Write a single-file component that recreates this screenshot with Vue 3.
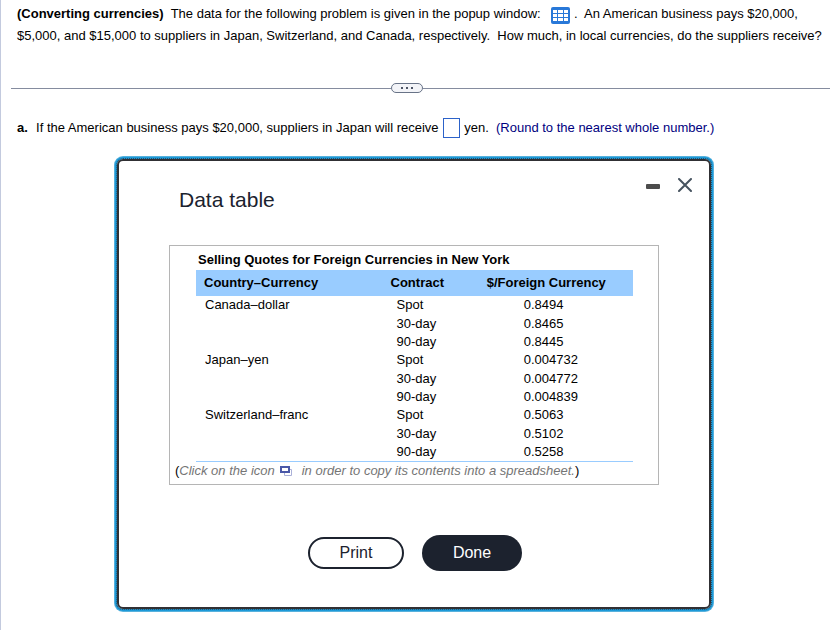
<script setup>
const groups = [
  {
    name: 'Canada–dollar',
    quotes: [['Spot', '0.8494'], ['30-day', '0.8465'], ['90-day', '0.8445']],
  },
  {
    name: 'Japan–yen',
    quotes: [['Spot', '0.004732'], ['30-day', '0.004772'], ['90-day', '0.004839']],
  },
  {
    name: 'Switzerland–franc',
    quotes: [['Spot', '0.5063'], ['30-day', '0.5102'], ['90-day', '0.5258']],
  },
]
</script>

<template>
  <main class="page">
    <p class="problem">
      <b>(Converting currencies)</b>&nbsp; The data for the following problem is given in the popup window:
      <button class="grid-button" type="button" aria-label="Open data table">
        <svg width="19" height="17" viewBox="0 0 19 17">
          <rect width="19" height="17" rx="2" fill="#2878d8" />
          <g fill="#fff">
            <rect x="2" y="3" width="4" height="3" /><rect x="7" y="3" width="5" height="3" /><rect x="13" y="3" width="4" height="3" />
            <rect x="2" y="7" width="4" height="3" /><rect x="7" y="7" width="5" height="3" /><rect x="13" y="7" width="4" height="3" />
            <rect x="2" y="11" width="4" height="3" /><rect x="7" y="11" width="5" height="3" /><rect x="13" y="11" width="4" height="3" />
          </g>
        </svg>
      </button>
      .&nbsp; An American business pays $20,000, $5,000, and $15,000 to suppliers in Japan, Switzerland, and Canada, respectively.&nbsp; How much, in local currencies, do the suppliers receive?
    </p>

    <div class="divider">
      <button class="expander" type="button" aria-label="Expand">
        <svg width="12" height="2" viewBox="0 0 12 2" fill="#4d5566">
          <rect width="2" height="2" /><rect x="5" width="2" height="2" /><rect x="10" width="2" height="2" />
        </svg>
      </button>
    </div>

    <p class="question">
      <label for="answer"><b>a.</b>&nbsp; If the American business pays $20,000, suppliers in Japan will receive</label>
      <input id="answer" class="answer" type="text" />
      yen.&nbsp; <span class="hint">(Round to the nearest whole number.)</span>
    </p>

    <section class="dialog" role="dialog" aria-labelledby="dialog-title">
      <header class="dialog-head">
        <h1 id="dialog-title">Data table</h1>
        <div class="window-buttons">
          <button type="button" aria-label="Minimize">
            <svg width="14" height="16" viewBox="0 0 14 16"><rect y="7" width="14" height="5" rx="1" fill="#4c4c4c" /></svg>
          </button>
          <button type="button" aria-label="Close">
            <svg width="14" height="14" viewBox="0 0 14 14">
              <path d="M1 1L13 13M13 1L1 13" stroke="#46535f" stroke-width="2" stroke-linecap="round" />
            </svg>
          </button>
        </div>
      </header>

      <div class="sheet">
        <table>
          <caption>Selling Quotes for Foreign Currencies in New York</caption>
          <colgroup><col class="col-country" /><col class="col-contract" /><col /></colgroup>
          <thead>
            <tr><th>Country–Currency</th><th>Contract</th><th>$/Foreign Currency</th></tr>
          </thead>
          <tbody v-for="group in groups" :key="group.name">
            <tr v-for="(quote, i) in group.quotes" :key="quote[0]">
              <td>{{ i === 0 ? group.name : '' }}</td>
              <td>{{ quote[0] }}</td>
              <td>{{ quote[1] }}</td>
            </tr>
          </tbody>
        </table>
        <p class="note">
          (<i>Click on the icon</i>
          <button class="copy" type="button" aria-label="Copy to spreadsheet">
            <svg width="12" height="10" viewBox="0 0 12 10" fill="none">
              <path d="M9 3.5H11.5V9.5H4.5V7" stroke="#aab0d8" />
              <rect x="1" y="1" width="8" height="5" stroke="#4a58a8" stroke-width="2" fill="#fff" />
            </svg>
          </button>
          <i>in order to copy its contents into a spreadsheet.</i>)
        </p>
      </div>

      <footer class="actions">
        <button class="print" type="button">Print</button>
        <button class="done" type="button">Done</button>
      </footer>
    </section>
  </main>
</template>

<style>
body {
  margin: 0;
  background: #fff;
}
</style>

<style scoped>
.page {
  box-sizing: border-box;
  min-height: 100vh;
  border-left: 1px solid #c3cade;
  padding: 3px 3px 18px 10px;
  font: 13px/22px "Liberation Sans", Arial, sans-serif;
  color: #000;
}
p {
  margin: 0;
}
button {
  padding: 0;
  border: 0;
  background: none;
  font-family: inherit;
  cursor: pointer;
}
svg {
  display: block;
}
.problem {
  padding-left: 6px;
}
.grid-button {
  margin: 0 0 0 7px;
  vertical-align: -6px;
}
.divider {
  display: flex;
  align-items: center;
  margin-top: 36px;
}
.divider::before,
.divider::after {
  content: "";
  flex: 380 1 0;
  height: 1px;
  background: #858c9f;
}
.divider::after {
  flex-grow: 407;
}
.expander {
  display: flex;
  align-items: center;
  justify-content: center;
  box-sizing: border-box;
  width: 32px;
  height: 10px;
  border: 1px solid #687387;
  border-radius: 5px;
  background: #f3f4f8;
}
.question {
  margin-top: 24px;
  padding-left: 6px;
}
.question b {
  margin-right: 1px;
}
.answer {
  box-sizing: border-box;
  width: 17px;
  height: 20px;
  margin: 1px 1px 0 4px;
  padding: 0;
  border: 1px solid #2c62c9;
  vertical-align: top;
  font: inherit;
}
.hint {
  color: #000080;
}
.dialog {
  box-sizing: border-box;
  max-width: 594px;
  margin: 20px auto 0 106px;
  padding: 14px 17px 36px 16px;
  border: 2px solid #303034;
  border-radius: 6px;
  outline: 1px dotted #26506a;
  box-shadow: 0 0 0 2px #1c9ad9, 0 0 0 3px #58b1dc;
}
.dialog-head {
  display: flex;
  align-items: flex-start;
  justify-content: space-between;
  padding-left: 44px;
}
h1 {
  margin: 10px 0 0;
  font-size: 21px;
  font-weight: 400;
  line-height: 30px;
  color: #1b222e;
}
.window-buttons {
  display: flex;
  align-items: center;
  gap: 18px;
  margin-top: 2px;
}
.sheet {
  margin: 30px 33px 0 34px;
  padding: 3px 25px 4px 5px;
  border: 1px solid #b5b5b5;
}
table {
  box-sizing: border-box;
  width: calc(100% - 21px);
  margin-left: 21px;
  border-collapse: separate;
  border-spacing: 0;
  table-layout: fixed;
}
caption {
  padding-left: 2px;
  text-align: left;
  font-weight: 700;
  line-height: 21px;
}
.col-country {
  width: 42%;
}
.col-contract {
  width: 22%;
}
th,
td {
  padding: 0 8px;
  text-align: left;
  line-height: 18px;
}
td {
  padding: 0 0 0 9px;
}
th {
  height: 26px;
  background: #99ccff;
}
th:nth-child(2),
th:nth-child(3) {
  padding: 0 0 0 11px;
}
td:nth-child(2) {
  padding: 0 0 0 17px;
}
td:nth-child(3) {
  padding: 0 0 0 48px;
}
tr:nth-child(2) td {
  line-height: 19px;
}
tbody:last-child tr:last-child td {
  border-bottom: 1px solid #99ccff;
}
.note {
  line-height: 18px;
}
.note i {
  color: #757575;
}
.copy {
  margin: 0 10px 0 5px;
  vertical-align: -1px;
}
.actions {
  display: flex;
  align-items: center;
  justify-content: center;
  gap: 18px;
  margin-top: 50px;
  padding-left: 3px;
}
.actions button {
  box-sizing: border-box;
  font-size: 16px;
}
.print {
  width: 96px;
  height: 32px;
  border: 2px solid #1c222e;
  border-radius: 16px;
  color: #1c222e;
}
.done {
  width: 100px;
  height: 36px;
  border-radius: 18px;
  background: #1c222e;
  color: #fff;
}
</style>
